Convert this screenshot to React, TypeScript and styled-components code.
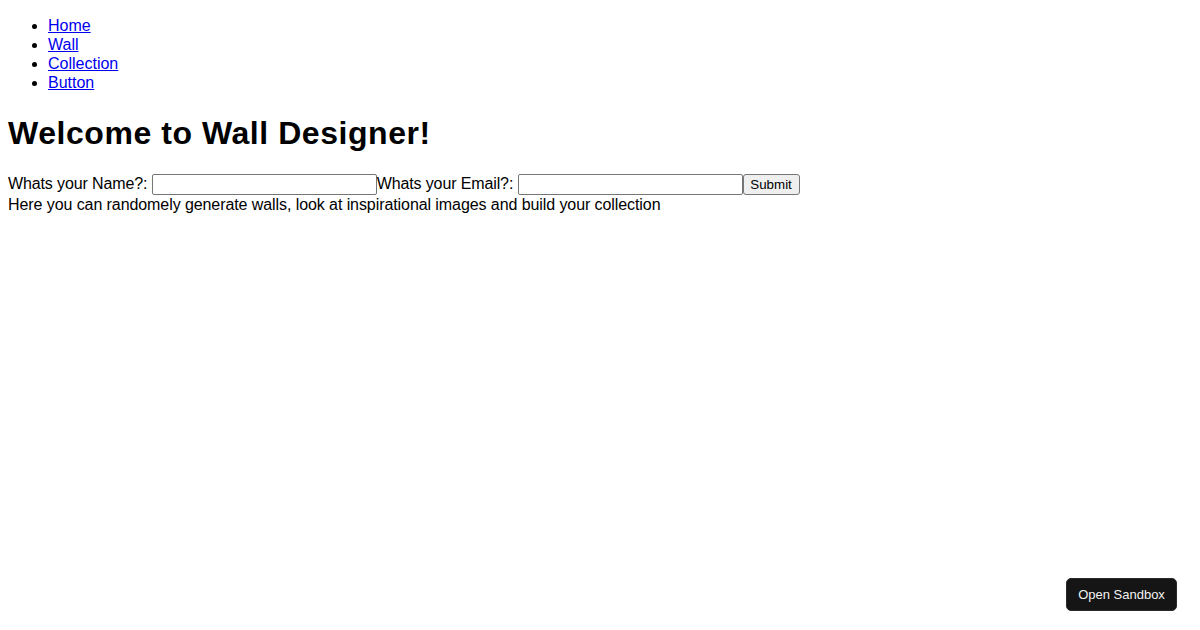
import React from "react";
import styled, { createGlobalStyle } from "styled-components";

const Global = createGlobalStyle`
  html, body {
    margin: 0;
    padding: 0;
  }
  body {
    padding: 0 8px;
    font-family: "Liberation Sans", Arial, sans-serif;
    font-size: 16px;
    color: #000;
    background: #fff;
  }
`;

const NavList = styled.ul`
  margin: 16px 0 0;
  padding-left: 40px;
  list-style: disc;
`;

const NavItem = styled.li`
  line-height: 19px;
`;

const NavLink = styled.a`
  color: #0000ee;
  text-decoration: underline;
`;

const Title = styled.h1`
  font-size: 32px;
  font-weight: bold;
  letter-spacing: 0.55px;
  line-height: 37px;
  margin: 23px 0 22px;
`;

const Form = styled.form`
  display: block;
  margin: 0;
  letter-spacing: -0.12px;
`;

const Label = styled.label`
  font-size: 16px;
`;

const TextInput = styled.input`
  box-sizing: border-box;
  width: 225px;
  height: 21px;
  padding: 1px 2px;
  border: 1px solid #767676;
  border-radius: 2px;
  font-family: "Liberation Sans", Arial, sans-serif;
  font-size: 13.33px;
  vertical-align: baseline;
  margin: 0;
  background: #fff;
`;

const SubmitButton = styled.button`
  box-sizing: border-box;
  height: 21px;
  width: 57px;
  padding: 1px 6px;
  border: 1px solid #767676;
  border-radius: 3px;
  background: #efefef;
  font-family: "Liberation Sans", Arial, sans-serif;
  font-size: 13.33px;
  letter-spacing: 0;
  color: #000;
  margin: 0;
`;

const Intro = styled.div`
  line-height: 19px;
  letter-spacing: -0.08px;
`;

const SandboxButton = styled.a`
  position: fixed;
  right: 23px;
  bottom: 19px;
  width: 111px;
  height: 33px;
  box-sizing: border-box;
  display: flex;
  align-items: center;
  justify-content: center;
  background: #151515;
  color: #f2f2f2;
  border-radius: 5px;
  font-family: "Liberation Sans", Arial, sans-serif;
  font-size: 13px;
  text-decoration: none;
  border: 1px solid #2a2a2a;
`;

export default function App() {
  return (
    <>
      <Global />
      <nav>
        <NavList>
          <NavItem><NavLink href="#">Home</NavLink></NavItem>
          <NavItem><NavLink href="#">Wall</NavLink></NavItem>
          <NavItem><NavLink href="#">Collection</NavLink></NavItem>
          <NavItem><NavLink href="#">Button</NavLink></NavItem>
        </NavList>
      </nav>
      <Title>Welcome to Wall Designer!</Title>
      <Form onSubmit={(e) => e.preventDefault()}>
        <Label>Whats your Name?: </Label>
        <TextInput type="text" />
        <Label>Whats your Email?: </Label>
        <TextInput type="text" />
        <SubmitButton type="submit">Submit</SubmitButton>
      </Form>
      <Intro>Here you can randomely generate walls, look at inspirational images and build your collection</Intro>
      <SandboxButton href="#">Open Sandbox</SandboxButton>
    </>
  );
}
